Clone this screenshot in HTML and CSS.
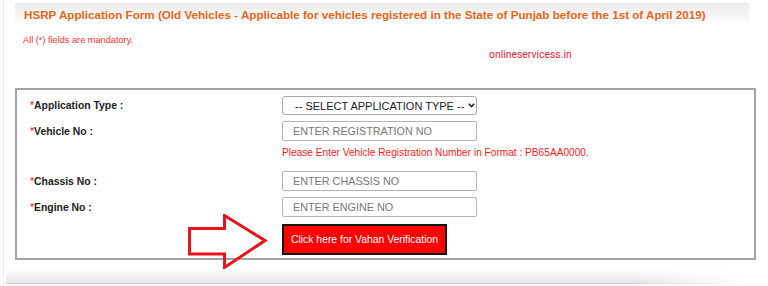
FILE: index.html
```html
<!DOCTYPE html>
<html>
<head>
<meta charset="utf-8">
<link rel="stylesheet" href="styles.css">
</head>
<body>
<div class="page">
  <div class="title-bar">
    <h1 class="title">HSRP Application Form (Old Vehicles - Applicable for vehicles registered in the State of Punjab before the 1st of April 2019)</h1>
  </div>
  <p class="mandatory">All (*) fields are mandatory.</p>
  <p class="watermark">onlineservicess.in</p>
  <div class="form-box">
    <div class="form-grid">
      <label class="label row-select"><span class="req">*</span>Application Type :</label>
      <div class="control row-select select-wrap">
        <select class="select">
          <option>-- SELECT APPLICATION TYPE --</option>
        </select>
        <svg class="chevron" width="7" height="5" viewBox="0 0 7 5">
          <path d="M0.8 0.8 L3.5 3.6 L6.2 0.8" fill="none" stroke="#222" stroke-width="1.6"/>
        </svg>
      </div>

      <label class="label row-input"><span class="req">*</span>Vehicle No :</label>
      <div class="control row-input">
        <input class="input" type="text" placeholder="ENTER REGISTRATION NO">
      </div>

      <div class="spacer"></div>
      <div class="error">Please Enter Vehicle Registration Number in Format : PB65AA0000.</div>

      <label class="label row-input"><span class="req">*</span>Chassis No :</label>
      <div class="control row-input">
        <input class="input" type="text" placeholder="ENTER CHASSIS NO">
      </div>

      <label class="label row-input"><span class="req">*</span>Engine No :</label>
      <div class="control row-input">
        <input class="input" type="text" placeholder="ENTER ENGINE NO">
      </div>

      <div class="spacer"></div>
      <div class="control">
        <button class="btn" type="button">Click here for Vahan Verification</button>
      </div>
    </div>
    <svg class="arrow" width="82" height="58" viewBox="0 0 82 58">
      <path d="M2.5 14.5 H37.5 V1.5 L78 26.5 L37.5 53.5 V40 H2.5 Z" fill="none" stroke="#e8141c" stroke-width="3" stroke-linejoin="miter"/>
    </svg>
  </div>
  <div class="footer-band"></div>
</div>
</body>
</html>
```
FILE: styles.css
```css
html, body {
  margin: 0;
  padding: 0;
  background: #ffffff;
}
body {
  font-family: "Liberation Sans", Arial, sans-serif;
  width: 768px;
  height: 286px;
  overflow: hidden;
}
.page {
  position: relative;
  height: 286px;
  border-left: 1px solid #ececec;
  margin-left: 3px;
  padding-top: 3px;
  box-sizing: border-box;
}
.title-bar {
  margin-left: 11px;
  width: 734px;
  height: 22px;
  background: linear-gradient(to bottom, #ebebeb 0%, #f6f6f6 60%, #ffffff 100%);
  display: flex;
  align-items: center;
  padding-left: 9px;
  box-sizing: border-box;
}
.title {
  margin: 0;
  font-size: 11.65px;
  font-weight: bold;
  color: #e0681c;
  white-space: nowrap;
  line-height: 14px;
  padding-top: 1px;
}
.mandatory {
  margin: 10px 0 0 19px;
  font-size: 9.2px;
  line-height: 11px;
  color: #ff3030;
}
.watermark {
  margin: 3px 0 0 485px;
  font-family: Roboto, "Liberation Sans", sans-serif;
  font-size: 10.4px;
  line-height: 12px;
  color: #e8243a;
}
.form-box {
  position: relative;
  margin: 27px 0 0 11px;
  width: 741px;
  height: 172px;
  border: 2px solid #a3a3a3;
  box-sizing: border-box;
  padding: 6px 0 0 13px;
}
.form-grid {
  display: grid;
  grid-template-columns: 252px 400px;
  row-gap: 6px;
}
.label {
  font-size: 10.4px;
  font-weight: bold;
  color: #222;
  display: flex;
  align-items: center;
}
.req {
  color: #e01010;
  font-weight: normal;
}
.row-select { height: 19px; }
.row-input { height: 20px; }
.control {
  display: flex;
  align-items: center;
}
.select-wrap {
  position: relative;
}
.select {
  -webkit-appearance: none;
  appearance: none;
  width: 195px;
  height: 19px;
  font-family: "Liberation Sans", Arial, sans-serif;
  font-size: 11px;
  color: #222;
  border: 1px solid #a9a9a9;
  border-radius: 3px;
  background: #fff;
  padding: 0 0 0 12px;
  box-sizing: border-box;
  margin: 0;
}
.chevron {
  position: absolute;
  left: 186px;
  top: 7px;
}
.input {
  width: 195px;
  height: 20px;
  font-family: "Liberation Sans", Arial, sans-serif;
  font-size: 10.8px;
  border: 1px solid #b4b4b4;
  border-radius: 2px;
  padding: 0 0 0 10px;
  box-sizing: border-box;
  color: #333;
  margin: 0;
}
.input::placeholder {
  color: #777;
}
.error {
  font-size: 10.15px;
  color: #ff1a1a;
  height: 18px;
  line-height: 12px;
  white-space: nowrap;
}
.btn {
  width: 165px;
  height: 31px;
  background: #ff0000;
  border: 2px solid #151515;
  color: #ffffff;
  font-family: "Liberation Sans", Arial, sans-serif;
  font-size: 10.4px;
  padding: 0;
  margin-top: 1px;
}
.arrow {
  position: absolute;
  left: 170px;
  top: 124px;
}
.footer-band {
  margin: 9px 0 0 2px;
  width: 740px;
  height: 14px;
  background: linear-gradient(to bottom, #ffffff 0%, #e3e6e9 100%);
  border-bottom: 1px solid #d2d6da;
  -webkit-mask-image: linear-gradient(to right, #000 85%, transparent 100%);
  mask-image: linear-gradient(to right, #000 85%, transparent 100%);
}
```
